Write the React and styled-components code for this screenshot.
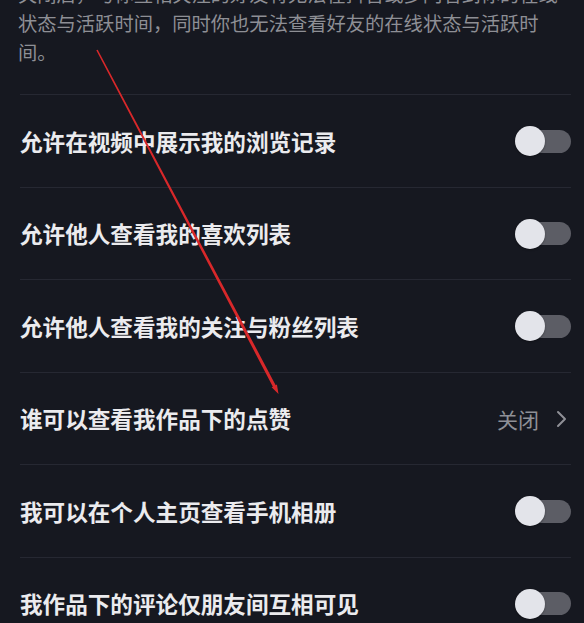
import React from "react";
import styled, { createGlobalStyle } from "styled-components";

const Global = createGlobalStyle`
  html, body { margin: 0; padding: 0; background: #161820; }
  body { font-family: "Noto Sans CJK SC", "Noto Sans", sans-serif; }
  * { box-sizing: border-box; }
`;

const Page = styled.div`
  position: relative;
  width: 584px;
  height: 623px;
  overflow: hidden;
  background: #161820;
`;

const Description = styled.p`
  margin: -20px 0 0;
  padding: 0 20px 27px 18px;
  font-size: 19.3px;
  line-height: 29px;
  color: #8e8f95;
  white-space: nowrap;
`;

const Row = styled.div`
  display: flex;
  align-items: center;
  justify-content: space-between;
  height: 92.5px;
  margin: 0 13px 0 20px;
  border-top: 1px solid #262832;
  padding-top: 1px;
`;

const Title = styled.span`
  font-size: 22.6px;
  font-weight: 700;
  color: #ebebee;
`;

const ToggleWrap = styled.div`
  position: relative;
  width: 56px;
  height: 30px;
  display: flex;
  align-items: center;
  justify-content: flex-end;
`;

const Track = styled.div`
  width: 52px;
  height: 23px;
  border-radius: 12px;
  background: ${(p) => (p.$on ? "#fe2c55" : "#5c5d65")};
`;

const Thumb = styled.div`
  position: absolute;
  left: 0;
  top: 0;
  width: 30px;
  height: 30px;
  border-radius: 50%;
  background: #e3e4ea;
  box-shadow: 0 1px 2px rgba(0, 0, 0, 0.35);
`;

const Value = styled.div`
  display: flex;
  align-items: center;
  gap: 16px;
  margin-right: 4px;
  font-size: 21px;
  color: #8f9096;
`;

const Arrow = styled.svg`
  position: absolute;
  left: 0;
  top: 0;
  pointer-events: none;
`;

const Toggle = ({ on }) => (
  <ToggleWrap>
    <Track $on={on} />
    <Thumb />
  </ToggleWrap>
);

const rows = [
  { title: "允许在视频中展示我的浏览记录", type: "toggle" },
  { title: "允许他人查看我的喜欢列表", type: "toggle" },
  { title: "允许他人查看我的关注与粉丝列表", type: "toggle" },
  { title: "谁可以查看我作品下的点赞", type: "value", value: "关闭" },
  { title: "我可以在个人主页查看手机相册", type: "toggle" },
  { title: "我作品下的评论仅朋友间互相可见", type: "toggle" },
];

export default function App() {
  return (
    <Page>
      <Global />
      <Description>
        关闭后，与你互相关注的好友将无法在抖音或多闪看到你的在线
        <br />
        状态与活跃时间，同时你也无法查看好友的在线状态与活跃时
        <br />
        间。
      </Description>
      {rows.map((r) => (
        <Row key={r.title}>
          <Title>{r.title}</Title>
          {r.type === "toggle" ? (
            <Toggle />
          ) : (
            <Value>
              {r.value}
              <svg width="12" height="18" viewBox="0 0 12 18">
                <path
                  d="M3 2 L10 9 L3 16"
                  fill="none"
                  stroke="#8f9096"
                  strokeWidth="2"
                  strokeLinecap="round"
                  strokeLinejoin="round"
                />
              </svg>
            </Value>
          )}
        </Row>
      ))}
      <Arrow width="584" height="623" viewBox="0 0 584 623">
        <polygon
          points="96.29,50.37 272.86,386.68 271.62,387.33 278.5,394 276.92,384.53 275.68,385.18 97.71,49.63"
          fill="#d8282a"
        />
      </Arrow>
    </Page>
  );
}
